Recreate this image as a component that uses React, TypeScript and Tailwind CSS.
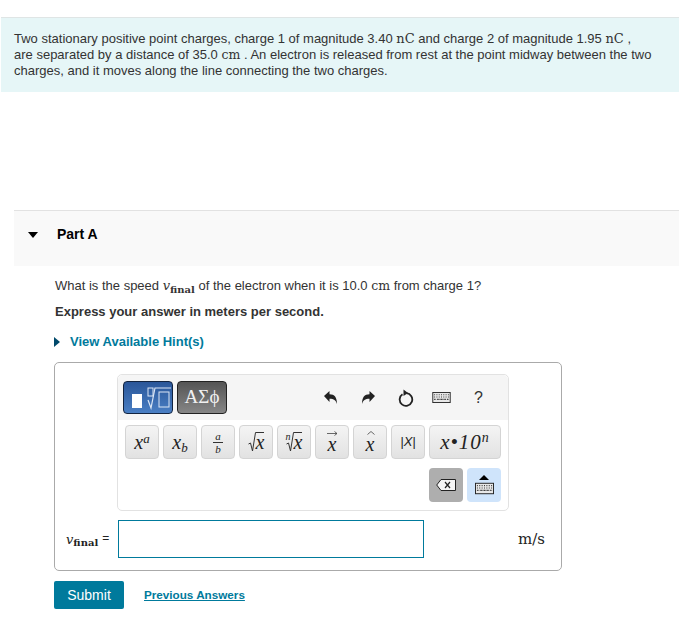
import type { ReactNode } from 'react';

const mathFont = 'font-["Liberation_Serif",serif]';
const texFont = 'font-["DejaVu_Serif",serif]';

function KeyboardIcon({ className }: { className?: string }) {
  return (
    <svg viewBox="0 0 20 12" className={className}>
      <rect x="0.5" y="0.5" width="19" height="11" fill="#e8e8e8" stroke="#222" />
      <path
        d="M2 3h1.5M4.5 3H6M7 3h1.5M9.500 3H11M12 3h1.500M14.500 3H16M17 3h1M2 5.500h1.500M4.500 5.500H6M7 5.500h1.500M9.500 5.500H11M12 5.500h1.500M14.500 5.500H16M17 5.500h1M2 8h2M5 8h10M16 8h2"
        stroke="#333"
        strokeWidth="1.200"
        strokeDasharray="1 0.5"
      />
    </svg>
  );
}

function ToolIcon({ children }: { children: ReactNode }) {
  return <div className="flex w-[37px] items-center justify-center">{children}</div>;
}

function MathKey({ children, wide }: { children: ReactNode; wide?: boolean }) {
  return (
    <div
      className={`flex h-[34px] ${wide ? 'w-[72px]' : 'w-[34px]'} items-center justify-center rounded-[4px] border border-[#d4d4d4] bg-linear-to-b from-[#f4f4f4] to-[#e2e2e2] text-[#222] ${mathFont} italic`}
    >
      {children}
    </div>
  );
}

export default function App() {
  return (
    <div className="min-h-[622px] bg-white pt-[17px] font-['Liberation_Sans',Arial,sans-serif] text-[#333]">
      <section className="ml-px h-[75px] border-t border-[#dfe5e5] bg-[#e6f6f7] pt-[13px] pr-[14px] pl-[13px] text-[13px] leading-4">
        <p>
          Two stationary positive point charges, charge 1 of magnitude 3.40{' '}
          <span className={`${texFont} text-[13px]`}>nC</span> and charge 2 of magnitude 1.95{' '}
          <span className={`${texFont} text-[13px]`}>nC</span> ,
          <br />
          are separated by a distance of 35.0 <span className={`${texFont} text-[12.500px]`}>cm</span> . An
          electron is released from rest at the point midway between the two
          <br />
          charges, and it moves along the line connecting the two charges.
        </p>
      </section>

      <section className="mt-[118px] ml-[14px] flex h-[56px] items-start border-t border-[#e2e2e2] bg-[#f9f9f9] pt-[15px]">
        <div className="mt-[6px] ml-[14px] h-0 w-0 border-x-[5.500px] border-t-[6px] border-x-transparent border-t-black" />
        <h2 className="ml-[19px] text-[14px] leading-4 font-bold text-black">Part A</h2>
      </section>

      <section className="ml-[54px] w-[508px]">
        <p className="mt-[12px] pl-px text-[13px] leading-4">
          What is the speed{' '}
          <span className={`${texFont} text-[13px] italic`}>
            v<sub className="text-[10px] font-bold not-italic">final</sub>
          </span>{' '}
          of the electron when it is 10.0 <span className={`${texFont} text-[12.500px]`}>cm</span> from
          charge 1?
        </p>
        <p className="mt-[10px] pl-px text-[13px] leading-4 font-bold">Express your answer in meters per second.</p>
        <div className="mt-[14px] flex items-center text-[13px] leading-4 font-bold text-[#007a9c]">
          <div className="h-0 w-0 border-y-[5px] border-l-[6px] border-y-transparent border-l-[#00496b]" />
          <span className="ml-[10px]">View Available Hint(s)</span>
        </div>

        <div className="mt-[12px] h-[209px] rounded-[5px] border border-[#aaa] pt-[11px]">
          <div className="ml-[62px] h-[137px] w-[392px] rounded-[5px] border border-[#e2e2e2]">
            <div className="flex h-[45px] items-center rounded-t-[5px] bg-[#f5f5f5] pl-[5px]">
              <div className="flex h-[33px] w-[50px] items-center justify-center rounded-[4px] border border-[#12233f] bg-linear-to-b from-[#2a5699] to-[#4a7fc4]">
                <svg viewBox="0 0 46 30" className="h-[30px] w-[46px]">
                  <rect x="7" y="11" width="10" height="14" fill="#fff" />
                  <path d="M23 17l3 8 4-20h16" fill="none" stroke="#dbe6f5" strokeWidth="1.200" />
                  <rect x="23" y="5" width="5" height="8" fill="none" stroke="#dbe6f5" />
                  <rect x="34" y="9" width="10" height="15" fill="none" stroke="#dbe6f5" />
                </svg>
              </div>
              <div className={`ml-1 flex h-[33px] w-[50px] items-center justify-center rounded-[4px] border border-[#222] bg-linear-to-b from-[#555] to-[#868686] text-[19px] text-[#f0f0f0] ${mathFont}`}>
                ΑΣϕ
              </div>
              <div className="ml-[85px] flex items-center">
                <ToolIcon>
                  <svg viewBox="0 0 16 16" className="h-4 w-4">
                    <path d="M1 6l5.500-5v3.200c5 0 7.500 3 7.500 9.800-1.200-3.800-3-5.200-7.500-5.200V12z" fill="#222" />
                  </svg>
                </ToolIcon>
                <ToolIcon>
                  <svg viewBox="0 0 16 16" className="h-4 w-4">
                    <path d="M15 6L9.500 1v3.200C4.500 4.200 2 7.200 2 14c1.200-3.800 3-5.200 7.500-5.200V12z" fill="#222" />
                  </svg>
                </ToolIcon>
                <ToolIcon>
                  <svg viewBox="0 0 18 18" className="h-[18px] w-[18px]">
                    <path d="M10.500 4.200a6.300 6.300 0 1 1-4 1" fill="none" stroke="#222" strokeWidth="1.800" />
                    <path d="M7.500 0.500l4.500 3.500-4.500 3z" fill="#222" />
                  </svg>
                </ToolIcon>
                <ToolIcon>
                  <KeyboardIcon className="h-[11px] w-[19px]" />
                </ToolIcon>
                <ToolIcon>
                  <span className="text-[16px] text-[#333]">?</span>
                </ToolIcon>
              </div>
            </div>

            <div className="mt-[5px] flex gap-1 pl-[7px]">
              <MathKey>
                <span className="text-[20px] leading-none">
                  x<sup className="text-[13px]">a</sup>
                </span>
              </MathKey>
              <MathKey>
                <span className="text-[20px] leading-none">
                  x<sub className="text-[13px]">b</sub>
                </span>
              </MathKey>
              <MathKey>
                <span className="flex flex-col items-center text-[11px] leading-[12px]">
                  <span>a</span>
                  <span className="w-[10px] border-t border-[#333] text-center">b</span>
                </span>
              </MathKey>
              <MathKey>
                <svg viewBox="0 0 8 20" className="h-5 w-2 shrink-0">
                  <path d="M0.500 12l2-1 2 8L7.500 0.500H8" fill="none" stroke="#333" />
                </svg>
                <span className="border-t border-[#333] text-[20px] leading-[19px]">x</span>
              </MathKey>
              <MathKey>
                <span className="relative flex items-center">
                  <span className="absolute top-[-3px] left-0 text-[10px]">n</span>
                  <svg viewBox="0 0 8 20" className="h-5 w-2 shrink-0">
                    <path d="M0.500 12l2-1 2 8L7.500 0.500H8" fill="none" stroke="#333" />
                  </svg>
                  <span className="border-t border-[#333] text-[20px] leading-[19px]">x</span>
                </span>
              </MathKey>
              <MathKey>
                <span className="relative mt-[3px] text-[20px] leading-[18px]">
                  x
                  <svg viewBox="0 0 11 5" className="absolute top-[-4px] left-[-1px] h-[5px] w-[11px]">
                    <path d="M0 2.500h10M7.500 0.500l2.500 2-2.500 2" fill="none" stroke="#444" strokeWidth="0.800" />
                  </svg>
                </span>
              </MathKey>
              <MathKey>
                <span className="relative mt-[3px] text-[20px] leading-[18px]">
                  x
                  <svg viewBox="0 0 8 4" className="absolute top-[-4px] left-px h-1 w-2">
                    <path d="M0.500 3.500L4 0.500l3.500 3" fill="none" stroke="#444" strokeWidth="0.800" />
                  </svg>
                </span>
              </MathKey>
              <MathKey>
                <span className="font-['Liberation_Sans',sans-serif] text-[13px]">|X|</span>
              </MathKey>
              <MathKey wide>
                <span className="text-[21px] leading-none tracking-[1px]">
                  x•10<sup className="text-[14px]">n</sup>
                </span>
              </MathKey>
            </div>

            <div className="mt-[9px] ml-[311px] flex gap-1">
              <div className="flex h-[34px] w-[34px] items-center justify-center rounded-[4px] bg-[#aeaeae]">
                <svg viewBox="0 0 20 12" className="h-3 w-5">
                  <path d="M5 0.500h14.500v11H5L0.700 6z" fill="#f5f5f5" stroke="#222" />
                  <path d="M9 3l5 6M14 3l-5 6" stroke="#222" strokeWidth="1.200" />
                </svg>
              </div>
              <div className="flex h-[34px] w-[34px] flex-col items-center justify-center gap-[2px] rounded-[4px] bg-[#cfe4fb]">
                <div className="h-0 w-0 border-x-[5px] border-b-[5px] border-x-transparent border-b-black" />
                <KeyboardIcon className="h-[13px] w-[19px]" />
              </div>
            </div>
          </div>

          <div className="mt-[9px] flex items-center">
            <div className={`-mt-px ml-[11px] w-[52px] text-[13px] leading-4 text-[#222] ${texFont}`}>
              <i>v</i>
              <sub className="text-[10px] font-bold">final</sub>
              <span className="ml-[4px] align-[2px] font-['Liberation_Sans',sans-serif] text-[12px]">=</span>
            </div>
            <div className="h-[38px] w-[306px] border border-[#007a9c] bg-white" />
            <span className={`ml-[94px] text-[15px] text-[#222] ${texFont}`}>m/s</span>
          </div>
        </div>

        <div className="mt-[10px] flex items-center">
          <button className="h-[28px] w-[70px] rounded-[2px] bg-[#007a9c] text-[14px] text-white">Submit</button>
          <a className="ml-[20px] text-[11.700px] font-bold text-[#007a9c] underline">Previous Answers</a>
        </div>
      </section>
    </div>
  );
}
